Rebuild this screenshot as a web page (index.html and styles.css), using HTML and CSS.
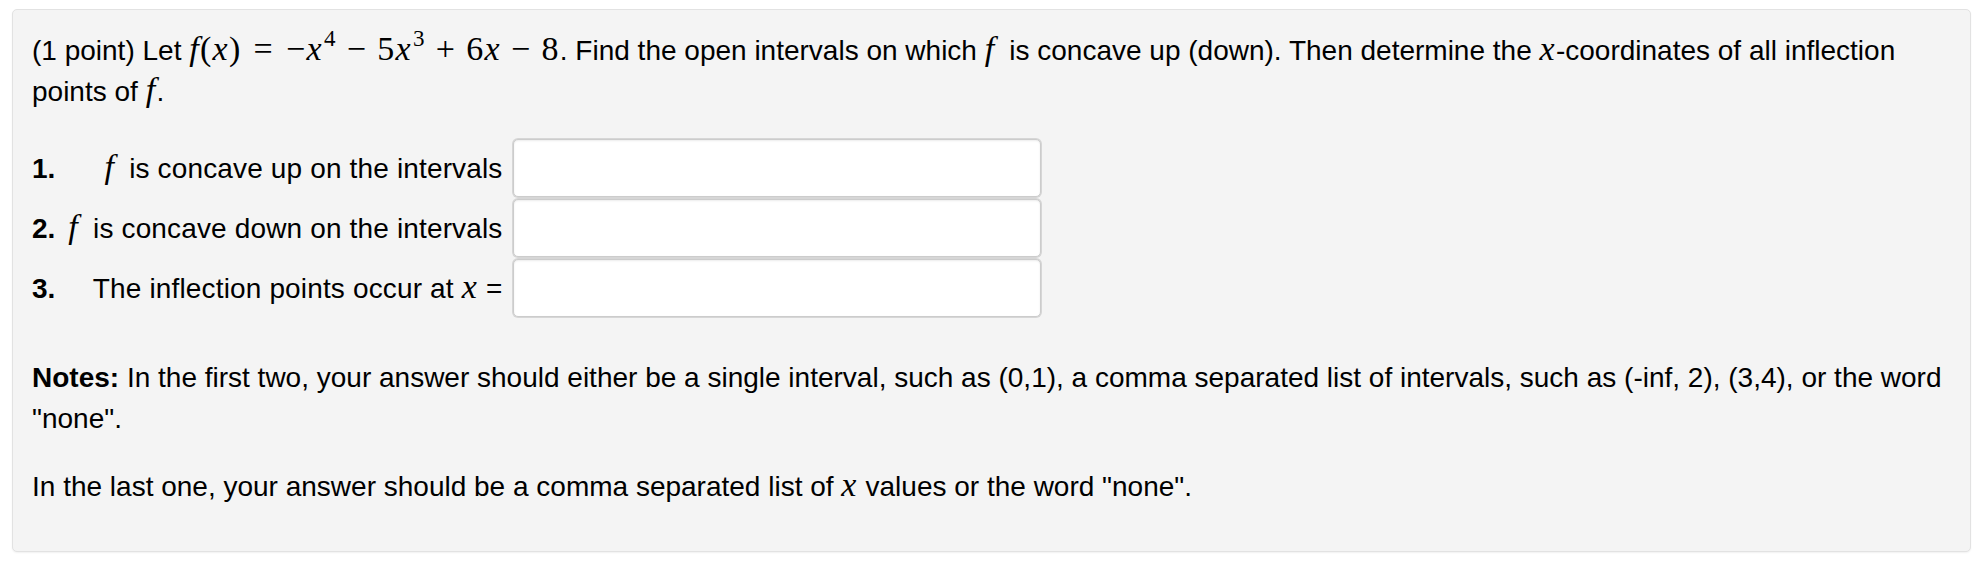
FILE: index.html
```html
<!DOCTYPE html>
<html>
<head>
<meta charset="utf-8">
<link rel="stylesheet" href="styles.css">
</head>
<body>
<div class="problem">
  <p class="intro">(1 point) Let <span class="math"><i>f</i>(<i>x</i>)<span class="rel">=</span>−<i>x</i><sup>4</sup><span class="bin">−</span>5<i>x</i><sup>3</sup><span class="bin">+</span>6<i>x</i><span class="bin">−</span>8</span>. Find the open intervals on which <span class="math fn"><i>f</i></span> is concave up (down). Then determine the <span class="math"><i>x</i></span>-coordinates of all inflection points of <span class="math"><i>f</i></span>.</p>

  <div class="answers">
    <b class="num">1.</b>
    <span class="label"><span class="math fn"><i>f</i></span> is concave up on the intervals</span>
    <span class="box"></span>

    <b class="num">2.</b>
    <span class="label"><span class="math fn"><i>f</i></span> is concave down on the intervals</span>
    <span class="box"></span>

    <b class="num">3.</b>
    <span class="label">The inflection points occur at <span class="math"><i>x</i></span> =</span>
    <span class="box"></span>
  </div>

  <p class="notes"><b>Notes:</b> In the first two, your answer should either be a single interval, such as (0,1), a comma separated list of intervals, such as (-inf, 2), (3,4), or the word "none".</p>

  <p class="last">In the last one, your answer should be a comma separated list of <span class="math"><i>x</i></span> values or the word "none".</p>
</div>
</body>
</html>
```

FILE: styles.css
```css
html, body {
  margin: 0;
  padding: 0;
  background: #ffffff;
}

body {
  padding: 9px 7px 8px 12px;
  font-family: "Liberation Sans", Arial, Helvetica, sans-serif;
  font-size: 28px;
  line-height: 41px;
  color: #000;
}

.problem {
  background: #f4f4f4;
  border: 1px solid #e2e2e2;
  border-radius: 5px;
  box-shadow: 0 1px 2px rgba(0,0,0,0.06);
  padding: 20px 24px 44px 19px;
}

p {
  margin: 0;
}

.intro {
  margin-bottom: 27px;
}

.math {
  font-family: "Liberation Serif", "Times New Roman", serif;
  font-size: 34px;
  line-height: 20px;
  letter-spacing: 1.3px;
  white-space: nowrap;
}

.math i {
  font-style: italic;
}

.math.fn {
  padding-right: 6px;
}

.math sup {
  font-size: 23px;
  line-height: 0;
  vertical-align: 0;
  position: relative;
  top: -14px;
  padding-left: 1px;
}

.math .rel {
  padding: 0 12px;
}

.math .bin {
  padding: 0 10px;
}

.answers {
  display: grid;
  grid-template-columns: auto auto 528px;
  justify-content: start;
  align-items: center;
  row-gap: 2px;
  margin-bottom: 40px;
}

.num {
  font-weight: bold;
  padding-right: 13px;
}

.label {
  text-align: right;
  padding-right: 10px;
  letter-spacing: 0.15px;
}

.box {
  display: block;
  height: 56px;
  background: #fff;
  border: 1px solid #cccccc;
  border-radius: 5px;
  box-shadow: inset 0 1px 2px rgba(0,0,0,0.08), 0 0 0 1px #d6d6d6;
}

.notes {
  margin-bottom: 27px;
}
```
